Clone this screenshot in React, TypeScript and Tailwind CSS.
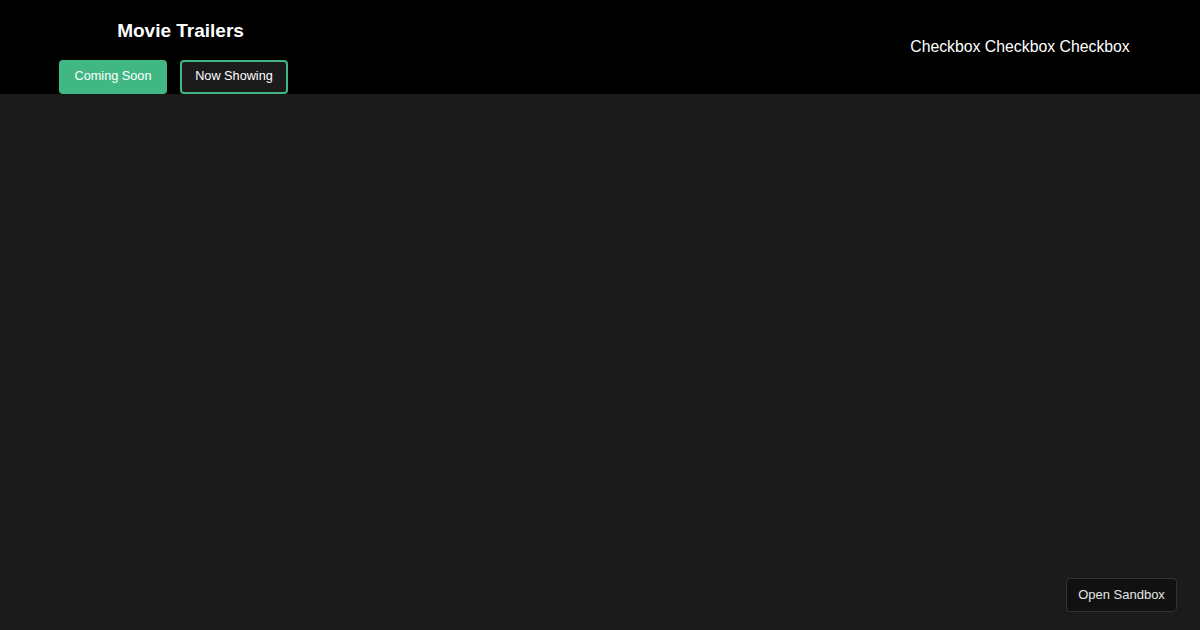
export default function App() {
  return (
    <div className="w-[1200px] h-[630px] bg-[#1b1b1b] relative overflow-hidden" style={{ fontFamily: '"Liberation Sans", Arial, sans-serif' }}>
      <header className="h-[94px] bg-black flex justify-between">
        <div className="w-[360px] flex flex-col">
          <h1 className="text-[19px] font-bold text-white text-center leading-none mt-[21px] ml-[1px]">Movie Trailers</h1>
          <div className="flex gap-[13px] pl-[59px] mt-[20px]">
            <button className="w-[108px] h-[34px] pb-[1px] rounded-[4px] bg-[#41b883] text-white text-[12.7px] leading-none">Coming Soon</button>
            <button className="w-[108px] h-[34px] pb-[1px] rounded-[4px] bg-[#1b1b1b] border-2 border-[#41b883] text-white text-[12.7px] leading-none">Now Showing</button>
          </div>
        </div>
        <div className="w-[360px] flex items-center justify-center">
          <span className="text-white text-[15.8px] leading-none">Checkbox Checkbox Checkbox</span>
        </div>
      </header>
      <button className="absolute left-[1066px] top-[578px] w-[111px] h-[34px] pb-[2px] rounded-[4px] bg-[#111111] border border-[#333333] text-[#e5e5e5] text-[13px] leading-none">Open Sandbox</button>
    </div>
  );
}
